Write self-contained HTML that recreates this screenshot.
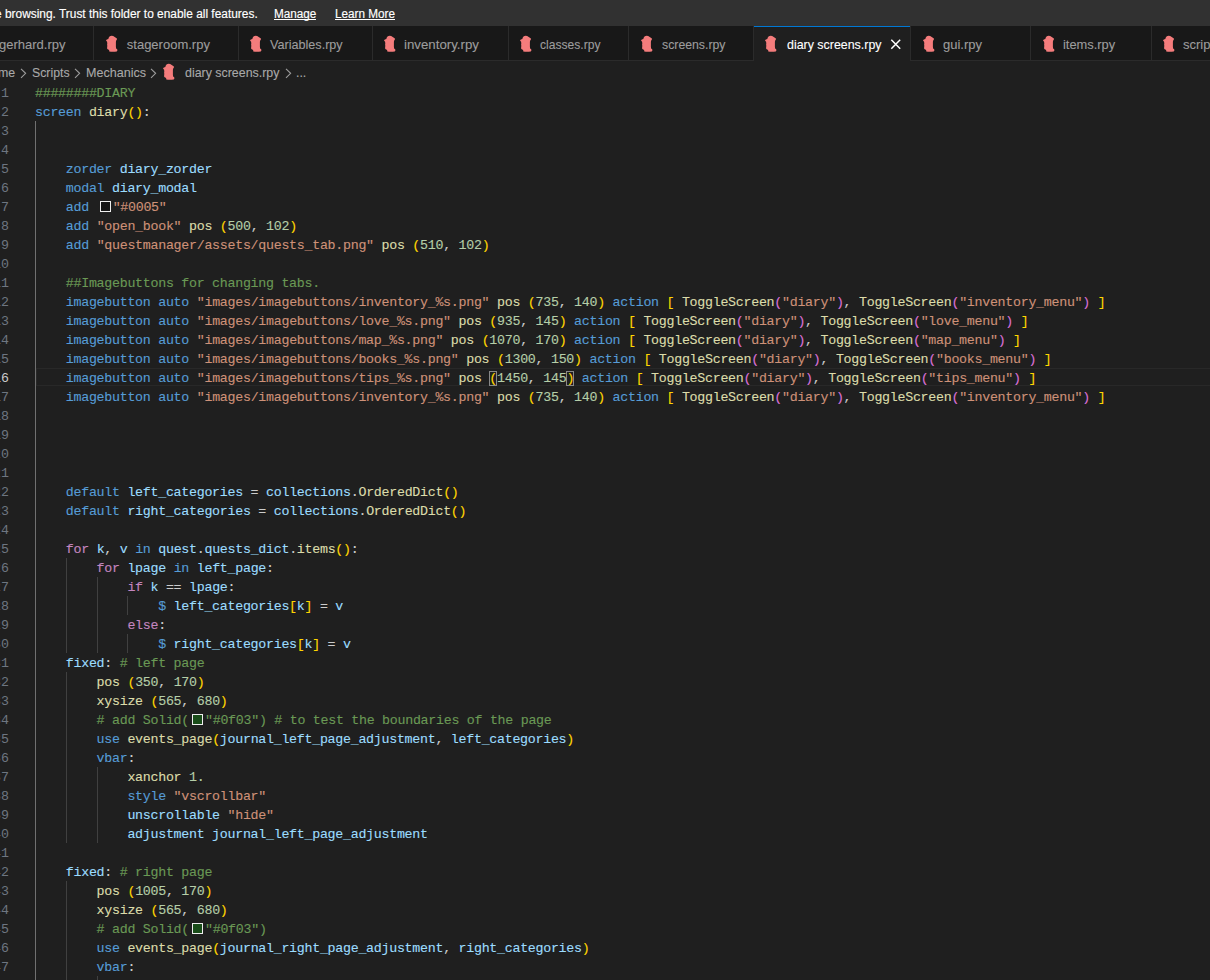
<!DOCTYPE html>
<html><head><meta charset="utf-8"><style>
html,body{margin:0;padding:0;width:1210px;height:980px;overflow:hidden;background:#1f1f1f;}
body{position:relative;font-family:"Liberation Sans",sans-serif;}
.abs{position:absolute;}
.t{white-space:nowrap;transform-origin:0 0;}
.banner{position:absolute;left:0;top:0;width:1210px;height:26px;background:#313131;overflow:hidden;}
.banner .t{-webkit-text-stroke:0.15px currentColor;}
.tabs{position:absolute;left:0;top:26px;width:1210px;height:35px;background:#181818;overflow:hidden;}
.tabs:after{content:"";position:absolute;left:0;right:0;bottom:0;height:1px;background:#2b2b2b;z-index:0;}
.tab{position:absolute;top:26px;height:34px;box-sizing:border-box;border-right:1px solid #2b2b2b;background:#181818;}
.tact{background:#1f1f1f;z-index:3;height:35px;}
.tact:before{content:"";position:absolute;left:0;right:0;top:0;height:1px;background:#0078d4;}
.tabs .abs{z-index:4;}
.tabs .t,.crumbs .t{-webkit-text-stroke:0.1px currentColor;}
.crumbs{position:absolute;left:0;top:61px;width:1210px;height:22px;overflow:hidden;}
.ln{position:absolute;right:1201px;height:19px;line-height:19px;font-family:"Liberation Mono",monospace;font-size:13.3px;color:#6e7681;text-align:right;padding-top:1px;}
.ln.act{color:#cccccc;}
.cl{position:absolute;left:35px;height:19px;line-height:19px;font-family:"Liberation Mono",monospace;font-size:13.3px;letter-spacing:-0.28px;color:#cccccc;white-space:pre;padding-top:1px;-webkit-text-stroke:0.12px currentColor;}
.cur{position:absolute;left:36px;right:0;top:368px;height:18px;box-sizing:border-box;border:1px solid #282828;border-right:0;}
.g{position:absolute;width:1px;background:#404040;}
.ga{background:#707070;}
.c{color:#6a9955}.k{color:#569cd6}.p{color:#c586c0}.f{color:#dcdcaa}.v{color:#9cdcfe}.s{color:#ce9178}.n{color:#b5cea8}.y{color:#ffd700}.m{color:#da70d6}
.br{outline:1px solid #888;outline-offset:-1px;}
.bx{display:inline-block;width:9px;height:9px;border:1px solid #eeeeee;margin:0 2px 0 3px;vertical-align:-1px;}
</style></head><body>
<div class="banner"><div class="abs t" style="left:-5.0px;top:7.80px;font-size:12px;line-height:12px;color:#ffffff;transform:scaleX(0.992);">e browsing. Trust this folder to enable all features.</div><div class="abs t" style="left:273.6px;top:7.80px;font-size:12px;line-height:12px;color:#ffffff;transform:scaleX(0.977);">Manage</div><div class="abs t" style="left:334.5px;top:7.80px;font-size:12px;line-height:12px;color:#ffffff;transform:scaleX(0.978);">Learn More</div><div class="abs" style="left:273.6px;top:19px;width:42.4px;height:1px;background:#ffffff"></div><div class="abs" style="left:334.5px;top:19px;width:60px;height:1px;background:#ffffff"></div></div>
<div class="tabs"><div style="position:absolute;left:0;top:-26px;width:1210px;height:980px"><div class="tab" style="left:-40.0px;width:134.0px"></div><div class="abs t" style="left:-1.0px;top:37.67px;font-size:13px;line-height:13px;color:#9d9d9d;transform:scaleX(1.000);">gerhard.rpy</div><div class="tab" style="left:94.0px;width:145.0px"></div><svg class="abs" style="left:100.3px;top:32.0px" width="24" height="24" viewBox="0 0 24 24"><path d="M9.8 4.2 L11.5 3.7 L13.2 4.0 L14.7 4.9 L16.2 5.9 L16.9 6.4 L16.9 7.6 L16.2 8.6 L15.9 9.8 L15.9 14.7 L16.2 16.7 L17.1 17.1 L17.4 18.6 L16.7 19.6 L14.7 19.8 L11.0 19.8 L9.3 19.6 L9.1 17.9 L7.3 17.1 L7.1 15.9 L7.3 13.7 L7.1 12.7 L7.3 11.5 L7.1 9.8 L6.4 9.1 L6.0 8.3 L6.9 7.6 L8.3 7.1 L8.8 5.6 Z" fill="#f47c7c"/></svg><div class="abs t" style="left:126.8px;top:37.67px;font-size:13px;line-height:13px;color:#9d9d9d;transform:scaleX(1.000);">stageroom.rpy</div><div class="tab" style="left:239.0px;width:133.5px"></div><svg class="abs" style="left:244.3px;top:32.0px" width="24" height="24" viewBox="0 0 24 24"><path d="M9.8 4.2 L11.5 3.7 L13.2 4.0 L14.7 4.9 L16.2 5.9 L16.9 6.4 L16.9 7.6 L16.2 8.6 L15.9 9.8 L15.9 14.7 L16.2 16.7 L17.1 17.1 L17.4 18.6 L16.7 19.6 L14.7 19.8 L11.0 19.8 L9.3 19.6 L9.1 17.9 L7.3 17.1 L7.1 15.9 L7.3 13.7 L7.1 12.7 L7.3 11.5 L7.1 9.8 L6.4 9.1 L6.0 8.3 L6.9 7.6 L8.3 7.1 L8.8 5.6 Z" fill="#f47c7c"/></svg><div class="abs t" style="left:270.3px;top:37.67px;font-size:13px;line-height:13px;color:#9d9d9d;transform:scaleX(0.970);">Variables.rpy</div><div class="tab" style="left:372.5px;width:136.0px"></div><svg class="abs" style="left:377.8px;top:32.0px" width="24" height="24" viewBox="0 0 24 24"><path d="M9.8 4.2 L11.5 3.7 L13.2 4.0 L14.7 4.9 L16.2 5.9 L16.9 6.4 L16.9 7.6 L16.2 8.6 L15.9 9.8 L15.9 14.7 L16.2 16.7 L17.1 17.1 L17.4 18.6 L16.7 19.6 L14.7 19.8 L11.0 19.8 L9.3 19.6 L9.1 17.9 L7.3 17.1 L7.1 15.9 L7.3 13.7 L7.1 12.7 L7.3 11.5 L7.1 9.8 L6.4 9.1 L6.0 8.3 L6.9 7.6 L8.3 7.1 L8.8 5.6 Z" fill="#f47c7c"/></svg><div class="abs t" style="left:404.1px;top:37.67px;font-size:13px;line-height:13px;color:#9d9d9d;transform:scaleX(1.020);">inventory.rpy</div><div class="tab" style="left:508.5px;width:120.5px"></div><svg class="abs" style="left:513.8px;top:32.0px" width="24" height="24" viewBox="0 0 24 24"><path d="M9.8 4.2 L11.5 3.7 L13.2 4.0 L14.7 4.9 L16.2 5.9 L16.9 6.4 L16.9 7.6 L16.2 8.6 L15.9 9.8 L15.9 14.7 L16.2 16.7 L17.1 17.1 L17.4 18.6 L16.7 19.6 L14.7 19.8 L11.0 19.8 L9.3 19.6 L9.1 17.9 L7.3 17.1 L7.1 15.9 L7.3 13.7 L7.1 12.7 L7.3 11.5 L7.1 9.8 L6.4 9.1 L6.0 8.3 L6.9 7.6 L8.3 7.1 L8.8 5.6 Z" fill="#f47c7c"/></svg><div class="abs t" style="left:540.3px;top:37.67px;font-size:13px;line-height:13px;color:#9d9d9d;transform:scaleX(0.930);">classes.rpy</div><div class="tab" style="left:629.0px;width:125.0px"></div><svg class="abs" style="left:634.5px;top:32.0px" width="24" height="24" viewBox="0 0 24 24"><path d="M9.8 4.2 L11.5 3.7 L13.2 4.0 L14.7 4.9 L16.2 5.9 L16.9 6.4 L16.9 7.6 L16.2 8.6 L15.9 9.8 L15.9 14.7 L16.2 16.7 L17.1 17.1 L17.4 18.6 L16.7 19.6 L14.7 19.8 L11.0 19.8 L9.3 19.6 L9.1 17.9 L7.3 17.1 L7.1 15.9 L7.3 13.7 L7.1 12.7 L7.3 11.5 L7.1 9.8 L6.4 9.1 L6.0 8.3 L6.9 7.6 L8.3 7.1 L8.8 5.6 Z" fill="#f47c7c"/></svg><div class="abs t" style="left:661.7px;top:37.67px;font-size:13px;line-height:13px;color:#9d9d9d;transform:scaleX(0.945);">screens.rpy</div><div class="tab tact" style="left:754.0px;width:157.0px"></div><svg class="abs" style="left:759.3px;top:32.0px" width="24" height="24" viewBox="0 0 24 24"><path d="M9.8 4.2 L11.5 3.7 L13.2 4.0 L14.7 4.9 L16.2 5.9 L16.9 6.4 L16.9 7.6 L16.2 8.6 L15.9 9.8 L15.9 14.7 L16.2 16.7 L17.1 17.1 L17.4 18.6 L16.7 19.6 L14.7 19.8 L11.0 19.8 L9.3 19.6 L9.1 17.9 L7.3 17.1 L7.1 15.9 L7.3 13.7 L7.1 12.7 L7.3 11.5 L7.1 9.8 L6.4 9.1 L6.0 8.3 L6.9 7.6 L8.3 7.1 L8.8 5.6 Z" fill="#f47c7c"/></svg><div class="abs t" style="left:786.8px;top:37.67px;font-size:13px;line-height:13px;color:#ffffff;transform:scaleX(0.955);">diary screens.rpy</div><div class="tab" style="left:911.0px;width:120.0px"></div><svg class="abs" style="left:916.8px;top:32.0px" width="24" height="24" viewBox="0 0 24 24"><path d="M9.8 4.2 L11.5 3.7 L13.2 4.0 L14.7 4.9 L16.2 5.9 L16.9 6.4 L16.9 7.6 L16.2 8.6 L15.9 9.8 L15.9 14.7 L16.2 16.7 L17.1 17.1 L17.4 18.6 L16.7 19.6 L14.7 19.8 L11.0 19.8 L9.3 19.6 L9.1 17.9 L7.3 17.1 L7.1 15.9 L7.3 13.7 L7.1 12.7 L7.3 11.5 L7.1 9.8 L6.4 9.1 L6.0 8.3 L6.9 7.6 L8.3 7.1 L8.8 5.6 Z" fill="#f47c7c"/></svg><div class="abs t" style="left:943.0px;top:37.67px;font-size:13px;line-height:13px;color:#9d9d9d;transform:scaleX(1.000);">gui.rpy</div><div class="tab" style="left:1031.0px;width:120.5px"></div><svg class="abs" style="left:1037.3px;top:32.0px" width="24" height="24" viewBox="0 0 24 24"><path d="M9.8 4.2 L11.5 3.7 L13.2 4.0 L14.7 4.9 L16.2 5.9 L16.9 6.4 L16.9 7.6 L16.2 8.6 L15.9 9.8 L15.9 14.7 L16.2 16.7 L17.1 17.1 L17.4 18.6 L16.7 19.6 L14.7 19.8 L11.0 19.8 L9.3 19.6 L9.1 17.9 L7.3 17.1 L7.1 15.9 L7.3 13.7 L7.1 12.7 L7.3 11.5 L7.1 9.8 L6.4 9.1 L6.0 8.3 L6.9 7.6 L8.3 7.1 L8.8 5.6 Z" fill="#f47c7c"/></svg><div class="abs t" style="left:1063.0px;top:37.67px;font-size:13px;line-height:13px;color:#9d9d9d;transform:scaleX(0.990);">items.rpy</div><div class="tab" style="left:1151.5px;width:248.5px"></div><svg class="abs" style="left:1157.3px;top:32.0px" width="24" height="24" viewBox="0 0 24 24"><path d="M9.8 4.2 L11.5 3.7 L13.2 4.0 L14.7 4.9 L16.2 5.9 L16.9 6.4 L16.9 7.6 L16.2 8.6 L15.9 9.8 L15.9 14.7 L16.2 16.7 L17.1 17.1 L17.4 18.6 L16.7 19.6 L14.7 19.8 L11.0 19.8 L9.3 19.6 L9.1 17.9 L7.3 17.1 L7.1 15.9 L7.3 13.7 L7.1 12.7 L7.3 11.5 L7.1 9.8 L6.4 9.1 L6.0 8.3 L6.9 7.6 L8.3 7.1 L8.8 5.6 Z" fill="#f47c7c"/></svg><div class="abs t" style="left:1183.0px;top:37.67px;font-size:13px;line-height:13px;color:#9d9d9d;transform:scaleX(1.000);">script.rpy</div><svg class="abs" style="left:890px;top:39px" width="12" height="11" viewBox="0 0 12 11"><path d="M1.3 0.8 L10.2 9.7 M10.2 0.8 L1.3 9.7" stroke="#ffffff" stroke-width="1.5" fill="none"/></svg></div></div>
<div class="crumbs"><div style="position:absolute;left:0;top:-61px;width:1210px;height:980px"><div class="abs t" style="left:-2.5px;top:66.17px;font-size:13px;line-height:13px;color:#a9a9a9;transform:scaleX(0.950);">me</div><svg class="abs" style="left:20.2px;top:67.5px" width="8" height="11" viewBox="0 0 8 11"><path d="M1 0.8 L5.6 5.3 L1 9.8" fill="none" stroke="#9d9d9d" stroke-width="1.1"/></svg><div class="abs t" style="left:31.5px;top:66.17px;font-size:13px;line-height:13px;color:#a9a9a9;transform:scaleX(0.945);">Scripts</div><svg class="abs" style="left:73.7px;top:67.5px" width="8" height="11" viewBox="0 0 8 11"><path d="M1 0.8 L5.6 5.3 L1 9.8" fill="none" stroke="#9d9d9d" stroke-width="1.1"/></svg><div class="abs t" style="left:86.0px;top:66.17px;font-size:13px;line-height:13px;color:#a9a9a9;transform:scaleX(0.966);">Mechanics</div><svg class="abs" style="left:150.4px;top:67.5px" width="8" height="11" viewBox="0 0 8 11"><path d="M1 0.8 L5.6 5.3 L1 9.8" fill="none" stroke="#9d9d9d" stroke-width="1.1"/></svg><svg class="abs" style="left:157.3px;top:60.0px" width="24" height="24" viewBox="0 0 24 24"><path d="M9.8 4.2 L11.5 3.7 L13.2 4.0 L14.7 4.9 L16.2 5.9 L16.9 6.4 L16.9 7.6 L16.2 8.6 L15.9 9.8 L15.9 14.7 L16.2 16.7 L17.1 17.1 L17.4 18.6 L16.7 19.6 L14.7 19.8 L11.0 19.8 L9.3 19.6 L9.1 17.9 L7.3 17.1 L7.1 15.9 L7.3 13.7 L7.1 12.7 L7.3 11.5 L7.1 9.8 L6.4 9.1 L6.0 8.3 L6.9 7.6 L8.3 7.1 L8.8 5.6 Z" fill="#f47c7c"/></svg><div class="abs t" style="left:184.6px;top:66.17px;font-size:13px;line-height:13px;color:#a9a9a9;transform:scaleX(0.954);">diary screens.rpy</div><svg class="abs" style="left:284.5px;top:67.5px" width="8" height="11" viewBox="0 0 8 11"><path d="M1 0.8 L5.6 5.3 L1 9.8" fill="none" stroke="#9d9d9d" stroke-width="1.1"/></svg><div class="abs t" style="left:295.5px;top:66.17px;font-size:13px;line-height:13px;color:#a9a9a9;transform:scaleX(0.950);">...</div></div></div>
<div class="cur"></div>
<div class="g ga" style="left:35px;top:121px;height:874px"></div>
<div class="g" style="left:66px;top:558px;height:95px"></div>
<div class="g" style="left:97px;top:577px;height:76px"></div>
<div class="g" style="left:127px;top:596px;height:19px"></div>
<div class="g" style="left:127px;top:634px;height:19px"></div>
<div class="g" style="left:66px;top:672px;height:171px"></div>
<div class="g" style="left:97px;top:767px;height:76px"></div>
<div class="g" style="left:66px;top:881px;height:114px"></div>
<div class="g" style="left:97px;top:976px;height:19px"></div>
<div class="ln" style="top:83px">1</div><div class="cl" style="top:83px"><span class="c">########DIARY</span></div>
<div class="ln" style="top:102px">2</div><div class="cl" style="top:102px"><span class="k">screen</span> <span class="f">diary</span><span class="y">()</span>:</div>
<div class="ln" style="top:121px">3</div><div class="cl" style="top:121px"></div>
<div class="ln" style="top:140px">4</div><div class="cl" style="top:140px"></div>
<div class="ln" style="top:159px">5</div><div class="cl" style="top:159px">    <span class="k">zorder</span> <span class="v">diary_zorder</span></div>
<div class="ln" style="top:178px">6</div><div class="cl" style="top:178px">    <span class="k">modal</span> <span class="v">diary_modal</span></div>
<div class="ln" style="top:197px">7</div><div class="cl" style="top:197px">    <span class="k">add</span> <i class="bx" style="background:#151515"></i><span class="s">&quot;#0005&quot;</span></div>
<div class="ln" style="top:216px">8</div><div class="cl" style="top:216px">    <span class="k">add</span> <span class="s">&quot;open_book&quot;</span> <span class="f">pos</span> <span class="y">(</span><span class="n">500</span>, <span class="n">102</span><span class="y">)</span></div>
<div class="ln" style="top:235px">9</div><div class="cl" style="top:235px">    <span class="k">add</span> <span class="s">&quot;questmanager/assets/quests_tab.png&quot;</span> <span class="f">pos</span> <span class="y">(</span><span class="n">510</span>, <span class="n">102</span><span class="y">)</span></div>
<div class="ln" style="top:254px">10</div><div class="cl" style="top:254px"></div>
<div class="ln" style="top:273px">11</div><div class="cl" style="top:273px">    <span class="c">##Imagebuttons for changing tabs.</span></div>
<div class="ln" style="top:292px">12</div><div class="cl" style="top:292px">    <span class="k">imagebutton</span> <span class="k">auto</span> <span class="s">&quot;images/imagebuttons/inventory_%s.png&quot;</span> <span class="f">pos</span> <span class="y">(</span><span class="n">735</span>, <span class="n">140</span><span class="y">)</span> <span class="k">action</span> <span class="y">[</span> <span class="f">ToggleScreen</span><span class="m">(</span><span class="s">&quot;diary&quot;</span><span class="m">)</span>, <span class="f">ToggleScreen</span><span class="m">(</span><span class="s">&quot;inventory_menu&quot;</span><span class="m">)</span> <span class="y">]</span></div>
<div class="ln" style="top:311px">13</div><div class="cl" style="top:311px">    <span class="k">imagebutton</span> <span class="k">auto</span> <span class="s">&quot;images/imagebuttons/love_%s.png&quot;</span> <span class="f">pos</span> <span class="y">(</span><span class="n">935</span>, <span class="n">145</span><span class="y">)</span> <span class="k">action</span> <span class="y">[</span> <span class="f">ToggleScreen</span><span class="m">(</span><span class="s">&quot;diary&quot;</span><span class="m">)</span>, <span class="f">ToggleScreen</span><span class="m">(</span><span class="s">&quot;love_menu&quot;</span><span class="m">)</span> <span class="y">]</span></div>
<div class="ln" style="top:330px">14</div><div class="cl" style="top:330px">    <span class="k">imagebutton</span> <span class="k">auto</span> <span class="s">&quot;images/imagebuttons/map_%s.png&quot;</span> <span class="f">pos</span> <span class="y">(</span><span class="n">1070</span>, <span class="n">170</span><span class="y">)</span> <span class="k">action</span> <span class="y">[</span> <span class="f">ToggleScreen</span><span class="m">(</span><span class="s">&quot;diary&quot;</span><span class="m">)</span>, <span class="f">ToggleScreen</span><span class="m">(</span><span class="s">&quot;map_menu&quot;</span><span class="m">)</span> <span class="y">]</span></div>
<div class="ln" style="top:349px">15</div><div class="cl" style="top:349px">    <span class="k">imagebutton</span> <span class="k">auto</span> <span class="s">&quot;images/imagebuttons/books_%s.png&quot;</span> <span class="f">pos</span> <span class="y">(</span><span class="n">1300</span>, <span class="n">150</span><span class="y">)</span> <span class="k">action</span> <span class="y">[</span> <span class="f">ToggleScreen</span><span class="m">(</span><span class="s">&quot;diary&quot;</span><span class="m">)</span>, <span class="f">ToggleScreen</span><span class="m">(</span><span class="s">&quot;books_menu&quot;</span><span class="m">)</span> <span class="y">]</span></div>
<div class="ln act" style="top:368px">16</div><div class="cl" style="top:368px">    <span class="k">imagebutton</span> <span class="k">auto</span> <span class="s">&quot;images/imagebuttons/tips_%s.png&quot;</span> <span class="f">pos</span> <span class="y br">(</span><span class="n">1450</span>, <span class="n">145</span><span class="y br">)</span> <span class="k">action</span> <span class="y">[</span> <span class="f">ToggleScreen</span><span class="m">(</span><span class="s">&quot;diary&quot;</span><span class="m">)</span>, <span class="f">ToggleScreen</span><span class="m">(</span><span class="s">&quot;tips_menu&quot;</span><span class="m">)</span> <span class="y">]</span></div>
<div class="ln" style="top:387px">17</div><div class="cl" style="top:387px">    <span class="k">imagebutton</span> <span class="k">auto</span> <span class="s">&quot;images/imagebuttons/inventory_%s.png&quot;</span> <span class="f">pos</span> <span class="y">(</span><span class="n">735</span>, <span class="n">140</span><span class="y">)</span> <span class="k">action</span> <span class="y">[</span> <span class="f">ToggleScreen</span><span class="m">(</span><span class="s">&quot;diary&quot;</span><span class="m">)</span>, <span class="f">ToggleScreen</span><span class="m">(</span><span class="s">&quot;inventory_menu&quot;</span><span class="m">)</span> <span class="y">]</span></div>
<div class="ln" style="top:406px">18</div><div class="cl" style="top:406px"></div>
<div class="ln" style="top:425px">19</div><div class="cl" style="top:425px"></div>
<div class="ln" style="top:444px">20</div><div class="cl" style="top:444px"></div>
<div class="ln" style="top:463px">21</div><div class="cl" style="top:463px"></div>
<div class="ln" style="top:482px">22</div><div class="cl" style="top:482px">    <span class="k">default</span> <span class="v">left_categories</span> = <span class="v">collections</span>.<span class="f">OrderedDict</span><span class="y">()</span></div>
<div class="ln" style="top:501px">23</div><div class="cl" style="top:501px">    <span class="k">default</span> <span class="v">right_categories</span> = <span class="v">collections</span>.<span class="f">OrderedDict</span><span class="y">()</span></div>
<div class="ln" style="top:520px">24</div><div class="cl" style="top:520px"></div>
<div class="ln" style="top:539px">25</div><div class="cl" style="top:539px">    <span class="p">for</span> <span class="v">k</span>, <span class="v">v</span> <span class="k">in</span> <span class="v">quest</span>.<span class="v">quests_dict</span>.<span class="f">items</span><span class="y">()</span>:</div>
<div class="ln" style="top:558px">26</div><div class="cl" style="top:558px">        <span class="p">for</span> <span class="v">lpage</span> <span class="k">in</span> <span class="v">left_page</span>:</div>
<div class="ln" style="top:577px">27</div><div class="cl" style="top:577px">            <span class="p">if</span> <span class="v">k</span> == <span class="v">lpage</span>:</div>
<div class="ln" style="top:596px">28</div><div class="cl" style="top:596px">                <span class="k">$</span> <span class="v">left_categories</span><span class="y">[</span><span class="v">k</span><span class="y">]</span> = <span class="v">v</span></div>
<div class="ln" style="top:615px">29</div><div class="cl" style="top:615px">            <span class="p">else</span>:</div>
<div class="ln" style="top:634px">30</div><div class="cl" style="top:634px">                <span class="k">$</span> <span class="v">right_categories</span><span class="y">[</span><span class="v">k</span><span class="y">]</span> = <span class="v">v</span></div>
<div class="ln" style="top:653px">31</div><div class="cl" style="top:653px">    <span class="v">fixed</span>: <span class="c"># left page</span></div>
<div class="ln" style="top:672px">32</div><div class="cl" style="top:672px">        <span class="f">pos</span> <span class="y">(</span><span class="n">350</span>, <span class="n">170</span><span class="y">)</span></div>
<div class="ln" style="top:691px">33</div><div class="cl" style="top:691px">        <span class="f">xysize</span> <span class="y">(</span><span class="n">565</span>, <span class="n">680</span><span class="y">)</span></div>
<div class="ln" style="top:710px">34</div><div class="cl" style="top:710px">        <span class="c"># add Solid(</span><i class="bx" style="background:#194c19"></i><span class="c">&quot;#0f03&quot;) # to test the boundaries of the page</span></div>
<div class="ln" style="top:729px">35</div><div class="cl" style="top:729px">        <span class="k">use</span> <span class="f">events_page</span><span class="y">(</span><span class="v">journal_left_page_adjustment</span>, <span class="v">left_categories</span><span class="y">)</span></div>
<div class="ln" style="top:748px">36</div><div class="cl" style="top:748px">        <span class="k">vbar</span>:</div>
<div class="ln" style="top:767px">37</div><div class="cl" style="top:767px">            <span class="f">xanchor</span> <span class="n">1.</span></div>
<div class="ln" style="top:786px">38</div><div class="cl" style="top:786px">            <span class="k">style</span> <span class="s">&quot;vscrollbar&quot;</span></div>
<div class="ln" style="top:805px">39</div><div class="cl" style="top:805px">            <span class="v">unscrollable</span> <span class="s">&quot;hide&quot;</span></div>
<div class="ln" style="top:824px">40</div><div class="cl" style="top:824px">            <span class="v">adjustment</span> <span class="v">journal_left_page_adjustment</span></div>
<div class="ln" style="top:843px">41</div><div class="cl" style="top:843px"></div>
<div class="ln" style="top:862px">42</div><div class="cl" style="top:862px">    <span class="v">fixed</span>: <span class="c"># right page</span></div>
<div class="ln" style="top:881px">43</div><div class="cl" style="top:881px">        <span class="f">pos</span> <span class="y">(</span><span class="n">1005</span>, <span class="n">170</span><span class="y">)</span></div>
<div class="ln" style="top:900px">44</div><div class="cl" style="top:900px">        <span class="f">xysize</span> <span class="y">(</span><span class="n">565</span>, <span class="n">680</span><span class="y">)</span></div>
<div class="ln" style="top:919px">45</div><div class="cl" style="top:919px">        <span class="c"># add Solid(</span><i class="bx" style="background:#194c19"></i><span class="c">&quot;#0f03&quot;)</span></div>
<div class="ln" style="top:938px">46</div><div class="cl" style="top:938px">        <span class="k">use</span> <span class="f">events_page</span><span class="y">(</span><span class="v">journal_right_page_adjustment</span>, <span class="v">right_categories</span><span class="y">)</span></div>
<div class="ln" style="top:957px">47</div><div class="cl" style="top:957px">        <span class="k">vbar</span>:</div>
</body></html>
